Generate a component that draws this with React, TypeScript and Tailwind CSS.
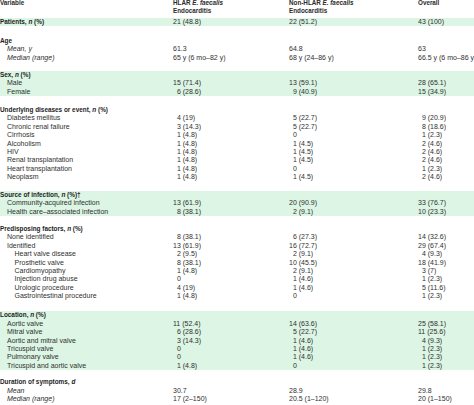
import React from "react";

type Row = {
  label: React.ReactNode;
  level: 0 | 1 | 2;
  head?: boolean;
  italic?: boolean;
  vals: [string, string, string];
};

type Section = { green: boolean; mt: string; rows: Row[] };

const n = <i>n</i>;

const sections: Section[] = [
  {
    green: true,
    mt: "mt-[2.3px]",
    rows: [{ label: <>Patients, {n} (%)</>, level: 0, head: true, vals: ["21 (48.8)", "22 (51.2)", "43 (100)"] }],
  },
  {
    green: false,
    mt: "mt-[10.5px]",
    rows: [
      { label: "Age", level: 0, head: true, vals: ["", "", ""] },
      { label: "Mean, y", level: 1, italic: true, vals: ["61.3", "64.8", "63"] },
      { label: "Median (range)", level: 1, italic: true, vals: ["65 y (6 mo–82 y)", "68 y (24–86 y)", "66.5 y (6 mo–86 y)"] },
    ],
  },
  {
    green: true,
    mt: "mt-[8.7px]",
    rows: [
      { label: <>Sex, {n} (%)</>, level: 0, head: true, vals: ["", "", ""] },
      { label: "Male", level: 1, vals: ["15 (71.4)", "13 (59.1)", "28 (65.1)"] },
      { label: "Female", level: 1, vals: ["6 (28.6)", "9 (40.9)", "15 (34.9)"] },
    ],
  },
  {
    green: false,
    mt: "mt-[9.6px]",
    rows: [
      { label: <>Underlying diseases or event, {n} (%)</>, level: 0, head: true, vals: ["", "", ""] },
      { label: "Diabetes mellitus", level: 1, vals: ["4 (19)", "5 (22.7)", "9 (20.9)"] },
      { label: "Chronic renal failure", level: 1, vals: ["3 (14.3)", "5 (22.7)", "8 (18.6)"] },
      { label: "Cirrhosis", level: 1, vals: ["1 (4.8)", "0", "1 (2.3)"] },
      { label: "Alcoholism", level: 1, vals: ["1 (4.8)", "1 (4.5)", "2 (4.6)"] },
      { label: "HIV", level: 1, vals: ["1 (4.8)", "1 (4.5)", "2 (4.6)"] },
      { label: "Renal transplantation", level: 1, vals: ["1 (4.8)", "1 (4.5)", "2 (4.6)"] },
      { label: "Heart transplantation", level: 1, vals: ["1 (4.8)", "0", "1 (2.3)"] },
      { label: "Neoplasm", level: 1, vals: ["1 (4.8)", "1 (4.5)", "2 (4.6)"] },
    ],
  },
  {
    green: true,
    mt: "mt-[9px]",
    rows: [
      { label: <>Source of infection, {n} (%)†</>, level: 0, head: true, vals: ["", "", ""] },
      { label: "Community-acquired infection", level: 1, vals: ["13 (61.9)", "20 (90.9)", "33 (76.7)"] },
      { label: "Health care–associated infection", level: 1, vals: ["8 (38.1)", "2 (9.1)", "10 (23.3)"] },
    ],
  },
  {
    green: false,
    mt: "mt-[8.7px]",
    rows: [
      { label: <>Predisposing factors, {n} (%)</>, level: 0, head: true, vals: ["", "", ""] },
      { label: "None identified", level: 1, vals: ["8 (38.1)", "6 (27.3)", "14 (32.6)"] },
      { label: "Identified", level: 1, vals: ["13 (61.9)", "16 (72.7)", "29 (67.4)"] },
      { label: "Heart valve disease", level: 2, vals: ["2 (9.5)", "2 (9.1)", "4 (9.3)"] },
      { label: "Prosthetic valve", level: 2, vals: ["8 (38.1)", "10 (45.5)", "18 (41.9)"] },
      { label: "Cardiomyopathy", level: 2, vals: ["1 (4.8)", "2 (9.1)", "3 (7)"] },
      { label: "Injection drug abuse", level: 2, vals: ["0", "1 (4.6)", "1 (2.3)"] },
      { label: "Urologic procedure", level: 2, vals: ["4 (19)", "1 (4.6)", "5 (11.6)"] },
      { label: "Gastrointestinal procedure", level: 2, vals: ["1 (4.8)", "0", "1 (2.3)"] },
    ],
  },
  {
    green: true,
    mt: "mt-[10.5px]",
    rows: [
      { label: <>Location, {n} (%)</>, level: 0, head: true, vals: ["", "", ""] },
      { label: "Aortic valve", level: 1, vals: ["11 (52.4)", "14 (63.6)", "25 (58.1)"] },
      { label: "Mitral valve", level: 1, vals: ["6 (28.6)", "5 (22.7)", "11 (25.6)"] },
      { label: "Aortic and mitral valve", level: 1, vals: ["3 (14.3)", "1 (4.6)", "4 (9.3)"] },
      { label: "Tricuspid valve", level: 1, vals: ["0", "1 (4.6)", "1 (2.3)"] },
      { label: "Pulmonary valve", level: 1, vals: ["0", "1 (4.6)", "1 (2.3)"] },
      { label: "Tricuspid and aortic valve", level: 1, vals: ["1 (4.8)", "0", "1 (2.3)"] },
    ],
  },
  {
    green: false,
    mt: "mt-[8.2px]",
    rows: [
      { label: <>Duration of symptoms, <i>d</i></>, level: 0, head: true, vals: ["", "", ""] },
      { label: "Mean", level: 1, italic: true, vals: ["30.7", "28.9", "29.8"] },
      { label: "Median (range)", level: 1, italic: true, vals: ["17 (2–150)", "20.5 (1–120)", "20 (1–150)"] },
    ],
  },
];

const grid = "grid grid-cols-[173px_116px_129px_56px] h-[8.45px] items-center";

function Val({ v }: { v: string }) {
  const pad = /^\d(\s|$)/.test(v);
  return <div className={pad ? "pl-[3.9px] whitespace-nowrap" : "whitespace-nowrap"}>{v}</div>;
}

export default function App() {
  return (
    <div
      className="w-[474px] h-[405px] overflow-hidden bg-white text-[#303030] text-[7px] leading-[8.45px]"
      style={{ fontFamily: '"Liberation Sans", Arial, sans-serif' }}
    >
      <div className="mt-[-1.2px] font-bold text-[6.3px] text-[#2a2a2a]">
        <div className={grid}>
          <div>Variable</div>
          <div className="whitespace-nowrap">
            HLAR <i>E. faecalis</i>
          </div>
          <div className="whitespace-nowrap">
            Non-HLAR <i>E. faecalis</i>
          </div>
          <div>Overall</div>
        </div>
        <div className={grid}>
          <div />
          <div>Endocarditis</div>
          <div>Endocarditis</div>
          <div />
        </div>
      </div>
      {sections.map((s, si) => (
        <div key={si} className={`${s.mt} ${s.green ? "bg-[#dcf5e4]" : ""}`}>
          {s.rows.map((r, ri) => (
            <div key={ri} className={grid}>
              <div
                className={[
                  "whitespace-nowrap",
                  r.level === 1 ? "pl-[7px]" : r.level === 2 ? "pl-[14.5px]" : "",
                  r.head ? "font-bold text-[6.4px] text-[#1e1e1e]" : "",
                  r.italic ? "italic" : "",
                ].join(" ")}
              >
                {r.label}
              </div>
              {r.vals.map((v, vi) => (
                <Val key={vi} v={v} />
              ))}
            </div>
          ))}
        </div>
      ))}
    </div>
  );
}
